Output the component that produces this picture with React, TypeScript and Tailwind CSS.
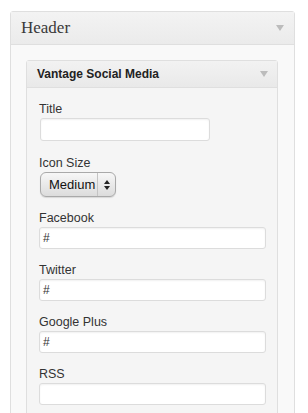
import React from "react";

const Arrow = () => (
  <svg width="8" height="6" viewBox="0 0 8 6" className="block">
    <path d="M0 0 L8 0 L4 6 Z" fill="#bcbcbc" />
  </svg>
);

const Field = ({ label, value }: { label: string; value: string }) => (
  <div className="mb-[13px]">
    <div className="h-[16px] leading-[16px] text-[12.5px] text-[#333]">{label}</div>
    <div className="mt-[1px] h-[22px] w-full rounded-[3px] border border-[#dcdcdc] bg-white shadow-[inset_0_1px_2px_rgba(0,0,0,0.06)] flex items-center px-[3px] text-[12px] text-[#333]">
      {value}
    </div>
  </div>
);

export default function App() {
  return (
    <div
      className="w-[308px] h-[413px] overflow-hidden bg-white pt-[11px] pl-[10px] pr-[13px]"
      style={{ fontFamily: '"Liberation Sans", Arial, sans-serif' }}
    >
      <div className="rounded-t-[3px] border border-[#dfdfdf] bg-[#f9f9f9] h-[420px]">
        <div className="h-[33px] flex items-center justify-between pl-[10px] pr-[10px] border-b border-[#dfdfdf] bg-gradient-to-b from-[#f3f3f3] to-[#ebebeb]">
          <span
            className="text-[17px] text-[#3a3a3a]"
            style={{ fontFamily: '"Liberation Serif", "Times New Roman", serif' }}
          >
            Header
          </span>
          <Arrow />
        </div>
        <div className="pt-[15px] pl-[15px] pr-[16px]">
          <div className="rounded-t-[3px] border border-[#dfdfdf] bg-[#f5f5f5] h-[400px]">
            <div className="h-[27px] flex items-center justify-between pl-[10px] pr-[9px] border-b border-[#dfdfdf] bg-gradient-to-b from-[#f2f2f2] to-[#e9e9e9]">
              <span className="text-[12px] font-bold text-[#222]">Vantage Social Media</span>
              <Arrow />
            </div>
            <div className="pt-[13px] pl-[12px] pr-[11px]">
              <div className="mb-[14px]">
                <div className="h-[16px] leading-[16px] text-[12.5px] text-[#333]">Title</div>
                <div className="mt-[1px] ml-[1px] h-[23px] w-[170px] rounded-[3px] border border-[#dcdcdc] bg-white shadow-[inset_0_1px_2px_rgba(0,0,0,0.06)]" />
              </div>
              <div className="mb-[13px]">
                <div className="h-[16px] leading-[16px] text-[12.5px] text-[#333]">Icon Size</div>
                <div className="mt-[1px] ml-[1px] h-[25px] w-[76px] rounded-[6px] border border-[#a9a9a9] bg-gradient-to-b from-[#f7f7f7] to-[#dcdcdc] shadow-[0_1px_1px_rgba(0,0,0,0.12)] flex items-center">
                  <span className="flex-1 pl-[8px] text-[13px] text-[#111]">Medium</span>
                  <div className="h-full w-[18px] border-l border-[#c4c4c4] flex items-center justify-center">
                    <svg width="6" height="10" viewBox="0 0 6 10">
                      <path d="M3 0 L6 4 L0 4 Z" fill="#222" />
                      <path d="M0 6 L6 6 L3 10 Z" fill="#222" />
                    </svg>
                  </div>
                </div>
              </div>
              <Field label="Facebook" value="#" />
              <Field label="Twitter" value="#" />
              <Field label="Google Plus" value="#" />
              <Field label="RSS" value="" />
            </div>
          </div>
        </div>
      </div>
    </div>
  );
}
